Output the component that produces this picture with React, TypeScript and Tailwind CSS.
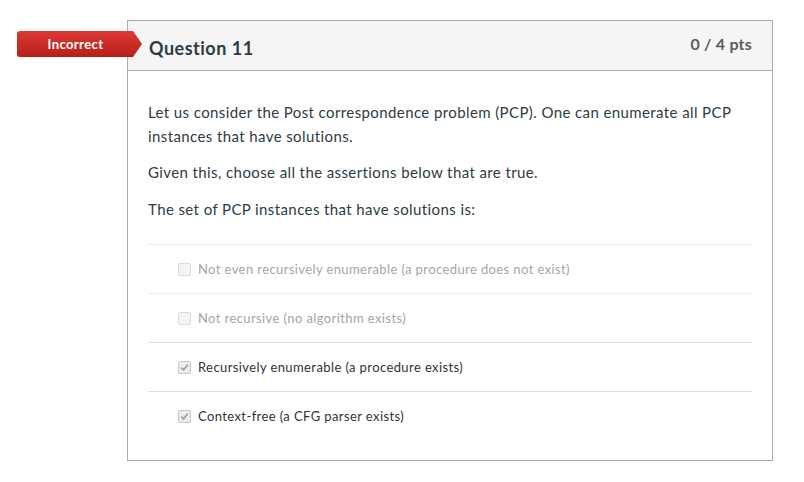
import React from "react";

const answers = [
  { text: "Not even recursively enumerable (a procedure does not exist)", checked: false },
  { text: "Not recursive (no algorithm exists)", checked: false },
  { text: "Recursively enumerable (a procedure exists)", checked: true },
  { text: "Context-free (a CFG parser exists)", checked: true },
];

function Box({ checked }: { checked: boolean }) {
  return (
    <span
      className={
        "flex h-[13px] w-[13px] items-center justify-center rounded-[2px] border " +
        (checked ? "border-[#c8c8c8] bg-[#ececec]" : "border-[#dadada] bg-[#f4f4f4]")
      }
    >
      {checked && (
        <svg width="9" height="9" viewBox="0 0 10 10">
          <path d="M1.5 5.2 L4 7.6 L8.6 2" fill="none" stroke="#9a9a9a" strokeWidth="1.8" />
        </svg>
      )}
    </span>
  );
}

export default function App() {
  return (
    <div className="w-[804px] h-[482px] bg-white pt-[20px] pl-[127px] relative tracking-[0.4px]" style={{ fontFamily: "Lato, 'Open Sans', sans-serif" }}>
      <div
        className="absolute left-[17px] top-[31px] h-[26px] w-[125px] rounded-l-[3px] bg-gradient-to-b from-[#dd3a32] to-[#b61e1a] shadow-[0_1px_2px_rgba(0,0,0,0.3)] flex items-center z-10"
        style={{ clipPath: "polygon(0 0, 116px 0, 100% 50%, 116px 100%, 0 100%)" }}
      >
        <span className="w-[117px] text-center text-[13px] font-bold text-white leading-none">Incorrect</span>
      </div>
      <div className="w-[646px] border border-[#aaaaaa]">
        <div className="h-[50px] bg-[#f5f5f5] border-b border-[#aaaaaa] flex justify-between pl-[21px] pr-[20px]">
          <div className="pt-[15px] text-[18px] font-bold text-[#2d3b45] leading-[24px] tracking-[0.5px]">Question 11</div>
          <div className="pt-[12px] text-[16px] font-bold text-[#5b5b5b] leading-[22px] tracking-[0.2px]">0 / 4 pts</div>
        </div>
        <div className="px-[20px] pt-[29px] pb-[20px] text-[#2d3b45]">
          <p className="text-[15px] leading-[24px]">
            Let us consider the Post correspondence problem (PCP). One can enumerate all PCP instances that have solutions.
          </p>
          <p className="mt-[12px] text-[15px] leading-[24px]">Given this, choose all the assertions below that are true.</p>
          <p className="mt-[13px] text-[15px] leading-[24px]">The set of PCP instances that have solutions is:</p>
          <div className="mt-[23px]">
            {answers.map((a, i) => (
              <div
                key={i}
                className={"h-[49px] flex items-center pl-[30px] gap-[7px] border-t " + (i < 2 ? "border-[#ececec]" : "border-[#dedede]")}
              >
                <Box checked={a.checked} />
                <span className={"text-[13px] pt-[1px] " + (a.checked ? "text-[#333333]" : "text-[#a5a5a5]")}>{a.text}</span>
              </div>
            ))}
          </div>
        </div>
      </div>
    </div>
  );
}
